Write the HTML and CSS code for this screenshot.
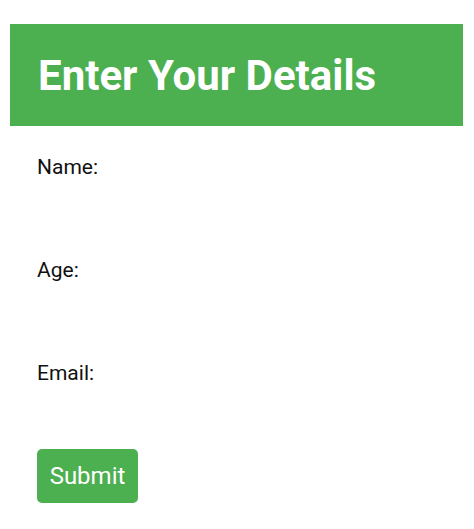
FILE: index.html
```html
<!DOCTYPE html>
<html>
<head>
<meta charset="utf-8">
<link rel="stylesheet" href="styles.css">
</head>
<body>
<header class="banner"><h1 class="title">Enter Your Details</h1></header>
<form class="form">
  <div class="field"><label class="label">Name:</label></div>
  <div class="field"><label class="label">Age:</label></div>
  <div class="field"><label class="label">Email:</label></div>
  <button type="button" class="submit">Submit</button>
</form>
</body>
</html>
```
FILE: styles.css
```css
html, body { margin: 0; padding: 0; background: #fff; }
body { padding: 24px 11px 0 10px; font-family: Roboto, "Noto Sans", sans-serif; }
.banner {
  background: #4caf50;
  height: 102px;
  display: flex;
  align-items: center;
  padding-left: 28px;
}
.title {
  margin: 0;
  color: #fff;
  font-size: 42px;
  font-weight: 700;
}
.form { padding-left: 27px; padding-top: 29px; display: flex; flex-direction: column; align-items: flex-start; }
.field { height: 103px; }
.label { font-size: 21px; color: #111; }
.submit {
  margin-top: -15px;
  background: #4caf50;
  color: #fff;
  border: none;
  border-radius: 5px;
  width: 101px;
  height: 54px;
  font-family: Roboto, sans-serif;
  font-size: 24px;
  padding: 0;
}
```
